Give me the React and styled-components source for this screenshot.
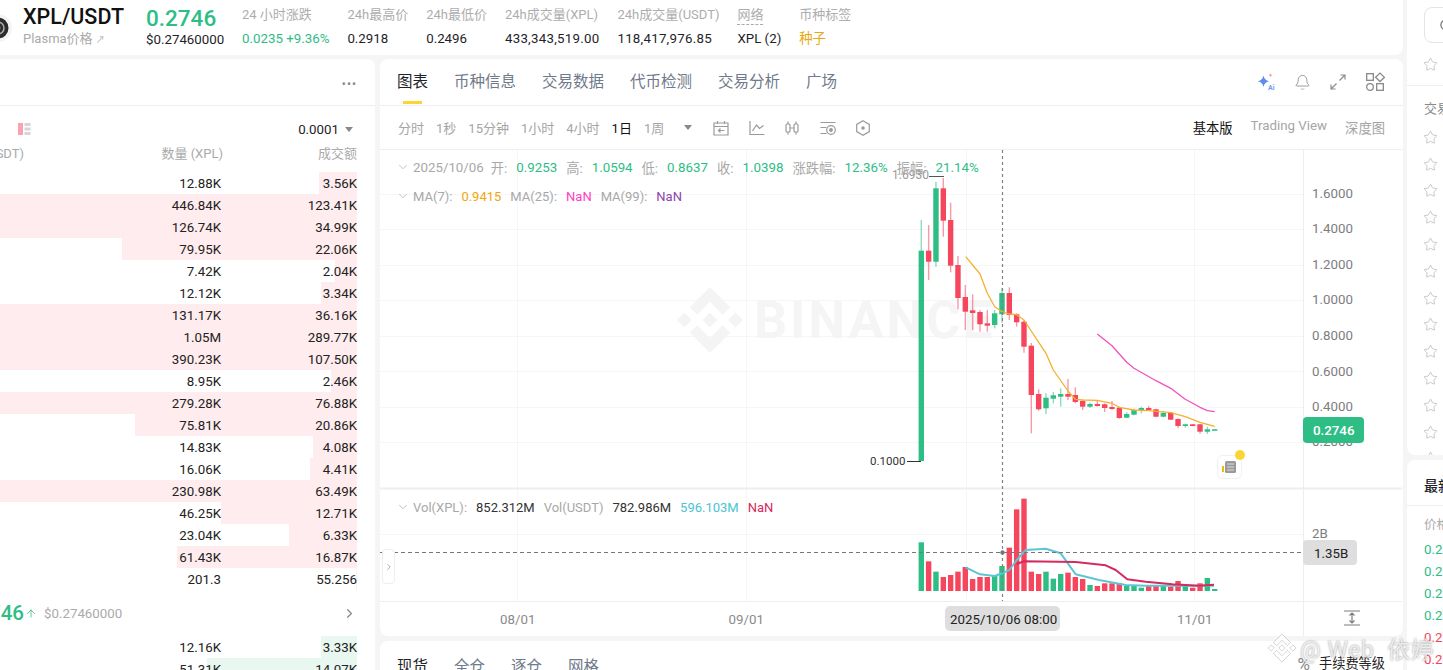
import React from 'react';
import styled, { createGlobalStyle } from 'styled-components';
import { Bell, ChevronDown, ChevronRight, Star, ArrowUp, Search } from 'lucide-react';

const GREEN = '#2ebd85';
const RED = '#f6465d';
const FONT = 'Roboto, "Noto Sans CJK SC", "Noto Sans", sans-serif';

const asks = [
  ['12.88K', '3.56K', 319],
  ['446.84K', '123.41K', 0],
  ['126.74K', '34.99K', 0],
  ['79.95K', '22.06K', 122],
  ['7.42K', '2.04K', 335],
  ['12.12K', '3.34K', 321],
  ['131.17K', '36.16K', 0],
  ['1.05M', '289.77K', 0],
  ['390.23K', '107.50K', 0],
  ['8.95K', '2.46K', 331],
  ['279.28K', '76.88K', 0],
  ['75.81K', '20.86K', 135],
  ['14.83K', '4.08K', 313],
  ['16.06K', '4.41K', 310],
  ['230.98K', '63.49K', 0],
  ['46.25K', '12.71K', 221],
  ['23.04K', '6.33K', 289],
  ['61.43K', '16.87K', 177],
  ['201.3', '55.256', 356],
];

const bids = [
  ['12.16K', '3.33K', 321],
  ['51.31K', '14.07K', 207],
];

const stats = [
  { label: '24 小时涨跌', value: '0.0235 +9.36%', tone: GREEN },
  { label: '24h最高价', value: '0.2918' },
  { label: '24h最低价', value: '0.2496' },
  { label: '24h成交量(XPL)', value: '433,343,519.00', wide: true },
  { label: '24h成交量(USDT)', value: '118,417,976.85', wide: true },
  { label: '网络', value: 'XPL (2)', dashed: true },
  { label: '币种标签', value: '种子', tone: '#e8a80c' },
];

const chartTabs = ['图表', '币种信息', '交易数据', '代币检测', '交易分析', '广场'];
const intervals = ['分时', '1秒', '15分钟', '1小时', '4小时', '1日', '1周'];

// up, bodyTop, bodyBottom, wickTop, wickBottom, in page pixels
const candles = [
  [1, 250.7, 461, 220, 461],
  [0, 250.7, 261.7, 225, 280],
  [1, 188.3, 261.7, 181.7, 266.7],
  [0, 188.3, 220.7, 178, 236.7],
  [0, 220, 265.7, 202.7, 272.3],
  [0, 265, 298, 256, 309.3],
  [0, 297, 311.7, 285, 330],
  [0, 310.3, 313, 294.3, 330],
  [0, 312, 324.3, 310, 331.7],
  [0, 323.3, 325.7, 310, 331.7],
  [1, 313.3, 325, 310, 328.3],
  [1, 293, 314.3, 288, 322.7],
  [0, 293, 315, 287.3, 320],
  [0, 314.3, 322.3, 313.3, 326.7],
  [0, 321.7, 346.7, 320, 352.7],
  [0, 345.7, 395, 343, 433.3],
  [0, 394, 409.3, 389.3, 410.7],
  [1, 397.7, 408.3, 393.3, 414],
  [1, 395.3, 398.7, 392, 403.3],
  [1, 394, 396.7, 388.3, 406.7],
  [0, 394, 396.7, 379, 400],
  [0, 395, 402, 387.3, 403.3],
  [0, 401, 406.7, 400, 410],
  [1, 404, 406.7, 402.7, 408],
  [0, 404, 406, 400, 406.7],
  [0, 404.3, 408, 403.3, 412],
  [0, 407, 409, 401, 410],
  [0, 407.7, 418, 406.7, 418.7],
  [1, 414, 417.7, 412.3, 418],
  [1, 410, 414.7, 408.7, 415.3],
  [1, 408, 410.3, 406.7, 413.3],
  [0, 408, 410, 406, 410.7],
  [0, 409.3, 416.7, 408.7, 417.3],
  [1, 413, 416.7, 410.7, 417.3],
  [0, 412.7, 419.7, 412, 420],
  [0, 419, 426, 418.3, 428.3],
  [1, 424.3, 426, 423.7, 427.7],
  [0, 424.3, 426, 424, 426.3],
  [0, 424.3, 431.7, 424, 433.7],
  [1, 429.3, 431.7, 426.7, 434],
  [1, 429.3, 430.7, 429.3, 430.7],
];

const volumeTops = [
  157, 214, 245, 261, 255, 245, 231, 267, 261, 261, 255, 228, 173, 58, 26, 245, 252, 245, 266, 252,
  248, 261, 267, 285, 288, 280, 280, 280, 288, 286, 293, 288, 288, 288, 290, 273, 288, 293, 280, 264, 297,
];

const ma7 = '966.7,256.7 981,274 988.3,293.3 995.7,306.7 1003,311.7 1010.3,314 1017.7,314.7 1025,320 1047,353.3 1054.3,370 1069,391 1076.3,399.3 1083.7,400 1098.3,400.3 1113,403.3 1120.3,407.3 1135,410 1149.7,410.7 1171.7,412.7 1186.3,416.7 1201,422.3 1215.7,426.3';
const ma25 = '1098.3,334 1113,345.7 1127.7,362.3 1135,368.3 1157,380.7 1171.7,388.3 1186.3,399.3 1201,407.3 1208.3,410.7 1215.7,411.7';
const volMa1 = '966.7,567.3 981,574.3 995.7,576 1003,573.3 1010.3,570 1017.7,560 1026.7,550 1046.7,548.7 1061.7,553.3 1076.7,574.3 1100,580 1126.7,585 1146.7,585.7 1215,585.7';
const volMa2 = '1017.7,564 1025,561.3 1076.7,562 1106.7,565.3 1116.7,570 1128.3,579.3 1146.7,581.7 1173.3,584.3 1200,585.7 1215,584.7';

const candleX = i => 922.3 + i * 7.335;

const GlobalStyle = createGlobalStyle`
  html, body {
    margin: 0;
    width: 1443px;
    height: 670px;
    overflow: hidden;
    background: #f5f5f5;
    font-family: ${FONT};
    color: #1e2329;
  }
`;

const Page = styled.div`
  display: flex;
  gap: 4px;
  width: 1730px;
  height: 670px;
  margin-left: -40px;
`;

const MainColumn = styled.div`
  display: flex;
  flex-direction: column;
  gap: 4px;
  width: 1443px;
  flex: none;
`;

const Header = styled.header`
  display: flex;
  align-items: center;
  height: 55px;
  padding-left: 24px;
  background: #fff;
  border-radius: 0 0 8px 0;
`;

const Logo = styled.div`
  display: flex;
  align-items: center;
  justify-content: center;
  width: 28px;
  height: 28px;
  margin-right: 11px;
  border-radius: 50%;
  background: #f4f4f4;
`;

const NameBlock = styled.div`
  width: 123px;
  margin-top: -4px;
`;

const PairName = styled.div`
  font-size: 21.5px;
  font-weight: 500;
  line-height: 28px;
  color: #111;
`;

const PairLink = styled.div`
  font-size: 13px;
  line-height: 16px;
  color: #aaa;
`;

const SmallArrow = styled.span`
  font-size: 9px;
  margin-left: 3px;
`;

const PriceBlock = styled.div`
  width: 96px;
  margin-top: -4px;
`;

const BigPrice = styled.div`
  font-size: 22.5px;
  font-weight: 500;
  line-height: 28px;
  color: ${GREEN};
`;

const SmallPrice = styled.div`
  font-size: 13.3px;
  line-height: 16px;
`;

const StatList = styled.div`
  display: flex;
  gap: 18px;
`;

const Stat = styled.div`
  display: flex;
  flex-direction: column;
  gap: 5px;
`;

const StatLabel = styled.div`
  font-size: 13px;
  line-height: 18px;
  color: #adadad;
  width: fit-content;
  border-bottom: ${p => (p.$dashed ? '1px dashed #aaa' : '1px solid transparent')};
  margin-top: -1px;
`;

const StatValue = styled.div`
  font-size: 13.3px;
  line-height: 18px;
  letter-spacing: ${p => (p.$wide ? '0.25px' : '0')};
  color: ${p => p.$tone || '#1e2329'};
`;

const Body = styled.div`
  display: flex;
  gap: 5px;
  flex: 1;
  min-height: 0;
`;

const BookPanel = styled.section`
  width: 415px;
  flex: none;
  background: #fff;
  border-radius: 0 8px 0 0;
  overflow: hidden;
`;

const BookTop = styled.div`
  display: flex;
  align-items: center;
  justify-content: flex-end;
  height: 46px;
  padding-right: 18px;
  border-bottom: 1px solid #eee;
`;

const Dots = styled.span`
  font-size: 12px;
  letter-spacing: 1px;
  color: #888;
  line-height: 1;
  margin-top: 4px;
`;

const BookControls = styled.div`
  display: flex;
  align-items: center;
  justify-content: space-between;
  height: 28px;
  margin-top: 9px;
  padding: 0 22px 0 58px;
  font-size: 13.3px;
`;

const TickSize = styled.span`
  display: flex;
  align-items: center;
  gap: 6px;
`;

const Caret = styled.span`
  width: 0;
  height: 0;
  border-left: 4px solid transparent;
  border-right: 4px solid transparent;
  border-top: 5px solid #888;
  margin-left: ${p => p.$gap || 0}px;
  margin-right: ${p => p.$after || 0}px;
`;

const BookHead = styled.div`
  display: grid;
  grid-template-columns: 64px 199px 134px;
  height: 22px;
  line-height: 22px;
  font-size: 13px;
  color: #aaa;
  margin-bottom: 7px;
  text-align: right;
  white-space: nowrap;
`;

const PriceHead = styled.span`
  justify-self: end;
`;

const BookRow = styled.div`
  position: relative;
  display: grid;
  grid-template-columns: 261px 136px;
  width: 397px;
  height: 22px;
  line-height: 23px;
  font-size: 13.3px;
  text-align: right;
  color: #222;
`;

const DepthBar = styled.div`
  position: absolute;
  top: 0;
  right: 0;
  bottom: 0;
  background: ${p => (p.$side === 'ask' ? '#feecee' : '#e9f7f1')};
`;

const BookCell = styled.span`
  position: relative;
`;

const MidRow = styled.div`
  display: flex;
  align-items: center;
  height: 46px;
  width: 397px;
  color: #aaa;
  font-size: 13.3px;
`;

const MidPrice = styled.span`
  display: flex;
  align-items: center;
  justify-content: flex-end;
  gap: 1px;
  width: 77px;
  flex: none;
  font-size: 20.5px;
  font-weight: 500;
  color: ${GREEN};
`;

const MidUsd = styled.span`
  flex: 1;
  padding-left: 7px;
`;

const RightColumn = styled.div`
  display: flex;
  flex-direction: column;
  gap: 5px;
  flex: 1;
  min-width: 0;
`;

const ChartPanel = styled.section`
  display: flex;
  flex-direction: column;
  height: 577px;
  flex: none;
  background: #fff;
  border-radius: 8px;
  overflow: hidden;
`;

const ChartTabs = styled.div`
  display: flex;
  align-items: center;
  height: 46px;
  flex: none;
  padding: 0 18px 0 17px;
  border-bottom: 1px solid #eee;
`;

const TabList = styled.div`
  display: flex;
  gap: 26px;
  flex: 1;
`;

const Tab = styled.div`
  position: relative;
  font-size: 15.5px;
  line-height: ${p => p.$line || 44}px;
  color: ${p => (p.$active ? '#1e2329' : '#707a8a')};

  ${p => p.$underline && `
    &::after {
      content: '';
      position: absolute;
      left: 6px;
      right: 6px;
      bottom: 0;
      height: 3px;
      background: #fcd535;
    }
  `}
`;

const IconRow = styled.div`
  display: flex;
  align-items: center;
  gap: 18px;
  color: #8b8b8b;
`;

const Toolbar = styled.div`
  display: flex;
  align-items: center;
  height: 43px;
  flex: none;
  padding: 0 18px;
  border-bottom: 1px solid #eee;
  font-size: 13px;
`;

const Intervals = styled.div`
  display: flex;
  align-items: center;
  gap: 12px;
`;

const Interval = styled.span`
  color: ${p => (p.$active ? '#111' : '#a5a5a5')};
`;

const ToolIcons = styled.div`
  display: flex;
  align-items: center;
  gap: 17.5px;
  flex: 1;
  color: #9a9a9a;
`;

const ViewTabs = styled.div`
  display: flex;
  gap: 18px;
  font-size: 13.3px;
`;

const Canvas = styled.div`
  position: relative;
  flex: 1;
  min-height: 0;

  svg.plot {
    display: block;
  }
`;

const Legend = styled.div`
  position: absolute;
  left: 16px;
  top: ${p => p.$top}px;
  display: flex;
  align-items: center;
  gap: 9px;
  height: 18px;
  font-size: ${p => p.$size || 13}px;
  color: #a8a8a8;
  white-space: nowrap;
`;

const LegendToggle = styled.span`
  display: flex;
  margin-right: -6px;
`;

const LegendDate = styled.span`
  margin-right: -2px;
`;

const LegendValue = styled.span`
  color: ${p => p.$tone || GREEN};
`;

const SideToggle = styled.div`
  position: absolute;
  left: 2px;
  top: 399px;
  display: flex;
  align-items: center;
  justify-content: center;
  width: 11px;
  height: 33px;
  background: #fff;
  border: 1px solid #eee;
  border-radius: 4px;
  color: #999;
`;

const AxisText = styled.text`
  font-family: ${FONT};
  font-size: ${p => p.$size || 13.3}px;
  fill: ${p => p.$fill || '#7d7d7d'};
  font-weight: ${p => p.$weight || 400};
  dominant-baseline: central;
`;

const OrderPanel = styled.section`
  display: flex;
  align-items: flex-start;
  justify-content: space-between;
  flex: 1;
  padding: 16px 18px 0 17px;
  background: #fff;
  border-radius: 8px 8px 0 0;
  overflow: hidden;
`;

const FeeLink = styled.div`
  display: flex;
  align-items: center;
  gap: 9px;
  margin-top: -3px;
  font-size: 13.2px;
  line-height: 20px;
  color: #222;
`;

const Percent = styled.span`
  font-size: 17px;
  color: #888;
`;

const SideColumn = styled.div`
  display: flex;
  flex-direction: column;
  gap: 5px;
  flex: 1;
  min-width: 0;
`;

const MarketCard = styled.section`
  height: 455px;
  flex: none;
  background: #fff;
  border-radius: 0 0 8px 8px;
  overflow: hidden;
`;

const SearchBox = styled.div`
  display: flex;
  align-items: center;
  height: 34px;
  margin: 7px 17px 0;
  padding-left: 14px;
  border: 1px solid #e4e4e4;
  border-radius: 8px;
  color: #777;
`;

const FavRow = styled.div`
  display: flex;
  align-items: center;
  height: 42px;
  padding-left: 16px;
  border-bottom: 1px solid #eee;
  color: #b5b5b5;
`;

const MarketHead = styled.div`
  padding-left: 17px;
  margin-top: 14px;
  height: 24px;
  line-height: 18px;
  font-size: 13px;
  color: #888;
`;

const StarRow = styled.div`
  display: flex;
  align-items: center;
  height: 26.8px;
  padding-left: 16px;
  color: #b5b5b5;
`;

const TradesCard = styled.section`
  flex: 1;
  background: #fff;
  border-radius: 8px 8px 0 0;
  overflow: hidden;
`;

const TradesTitle = styled.div`
  height: 45px;
  line-height: 52px;
  padding-left: 17px;
  font-size: 14px;
  font-weight: 500;
  color: #1e2329;
  border-bottom: 1px solid #eee;
`;

const TradesHead = styled.div`
  padding: 10px 0 5px 17px;
  line-height: 18px;
  font-size: 12.5px;
  color: #aaa;
`;

const TradeRow = styled.div`
  height: 22px;
  line-height: 22px;
  padding-left: 17px;
  font-size: 13.3px;
  color: ${p => (p.$up ? GREEN : RED)};
`;

const Stamp = styled.div`
  position: fixed;
  left: 1268px;
  top: 631px;
  display: flex;
  align-items: center;
  gap: 4px;
  font-size: 23px;
  white-space: pre;
  letter-spacing: 0.6px;
  color: rgba(255, 255, 255, 0.75);
  text-shadow: 0 0 2px rgba(90, 90, 90, 0.7);
  pointer-events: none;
`;

function BinanceMark({ size, fill, stroke }) {
  return (
    <svg width={size} height={size} viewBox="0 0 32 32">
      <g fill={fill} stroke={stroke} strokeWidth={stroke ? 0.6 : 0}>
        <path d="M9.8 13.4 16 7.2l6.2 6.2 3.6-3.6L16 0 6.2 9.8z" />
        <path d="M0 16l3.6-3.6L7.2 16l-3.6 3.6z" />
        <path d="M9.8 18.6 16 24.8l6.2-6.2 3.6 3.6L16 32l-9.8-9.8z" />
        <path d="M24.8 16l3.6-3.6L32 16l-3.6 3.6z" />
        <path d="M19.6 16 16 12.4 13.3 15.1l-.9.9L16 19.6z" />
      </g>
    </svg>
  );
}

function CoinLogo() {
  return (
    <Logo>
      <svg width="22" height="22" viewBox="0 0 22 22">
        <circle cx="11" cy="11" r="10.5" fill="#2b2b2b" />
        <circle cx="11" cy="11" r="6" fill="none" stroke="#aaa" strokeWidth="1.6" />
        <circle cx="11" cy="11" r="2.6" fill="#777" />
      </svg>
    </Logo>
  );
}

const Glyph = ({ children, size = 18, box = 18 }) => (
  <svg width={size} height={size} viewBox={`0 0 ${box} ${box}`} fill="none" stroke="currentColor" strokeWidth="1.2">
    {children}
  </svg>
);

function AiIcon() {
  return (
    <svg width="20" height="20" viewBox="0 0 20 20">
      <path d="M7.5 3.5c.7 3.4 2.2 5 5.6 5.8-3.4.8-4.9 2.4-5.6 5.8-.7-3.4-2.2-5-5.6-5.8 3.4-.8 4.9-2.4 5.6-5.8z" fill="#5b8def" />
      <path d="M14.5 1c.2 1.3.8 1.9 2 2.2-1.2.3-1.8.9-2 2.2-.2-1.3-.8-1.9-2-2.2 1.2-.3 1.8-.9 2-2.200z" fill="#f29aa8" />
      <text x="12" y="18" fontSize="7" fontWeight="700" fill="#6f9bf5" fontFamily="Roboto, sans-serif">Ai</text>
    </svg>
  );
}

function ExpandIcon() {
  return (
    <Glyph>
      <path d="M10.5 7.5 16 2M11.500 2H16v4.500M7.500 10.500 2 16M6.500 16H2v-4.500" />
    </Glyph>
  );
}

function LayoutIcon() {
  return (
    <Glyph size={20}>
      <rect x="1.500" y="1.500" width="6" height="6" />
      <path d="m13.500 1 4 3.800-4 3.800-4-3.800z" />
      <circle cx="4.500" cy="13.500" r="3" />
      <rect x="10.500" y="10.500" width="6" height="6" />
    </Glyph>
  );
}

function BookStyleIcon() {
  return (
    <svg width="13" height="12" viewBox="0 0 13 12">
      <rect x="0" y="0" width="5" height="12" fill="#f9a3ae" />
      <rect x="6.500" y="0" width="6" height="3" fill="#d5d5d5" />
      <rect x="6.500" y="4.500" width="6" height="3" fill="#d5d5d5" />
      <rect x="6.500" y="9" width="6" height="3" fill="#d5d5d5" />
    </svg>
  );
}

const toolGlyphs = [
  <Glyph key="date">
    <path d="M2 4h14v12H2zM2 7.500h14M5.500 2v3M12.500 2v3M12.500 11.500H6.500M8.500 9.500l-2 2 2 2" />
  </Glyph>,
  <Glyph key="line">
    <path d="M2 2v13.500h14.500M4.500 12l4-6 3 3.500 4-3" />
  </Glyph>,
  <Glyph key="candle">
    <rect x="3" y="5" width="4" height="8" rx="1" />
    <rect x="11" y="5" width="4" height="8" rx="1" />
    <path d="M5 2.500V5M5 13v2.500M13 2.500V5M13 13v2.500M7 9h4" />
  </Glyph>,
  <Glyph key="setting">
    <path d="M1.500 3.500h15M1.500 8.500h6M1.500 14.500h6" />
    <circle cx="12" cy="11" r="4.300" />
    <circle cx="12" cy="11" r="1.300" fill="currentColor" />
  </Glyph>,
  <Glyph key="hex">
    <path d="m9 1.800 6.300 3.600v7.200L9 16.200l-6.300-3.600V5.400z" />
    <circle cx="9" cy="9" r="1.800" fill="currentColor" stroke="none" />
  </Glyph>,
];

function FitIcon() {
  return (
    <g stroke="#7d7d7d" strokeWidth="1.200" fill="none">
      <path d="M1345 611h16M1345 625h16M1353 613v10M1350.500 615.500l2.500-2.500 2.500 2.500M1350.500 620.500l2.500 2.500 2.500-2.500" />
    </g>
  );
}

function Plot() {
  return (
    <svg className="plot" width="1022" height="486" viewBox="381 150 1022 486">
      <g stroke="#f6f6f6" strokeWidth="1">
        {[194, 229, 265, 300, 336, 371, 407, 442, 534].map(y => (
          <line key={y} x1="381" x2="1304" y1={y + 0.5} y2={y + 0.5} />
        ))}
        {[518, 747, 967, 1195].map(x => (
          <line key={x} x1={x + 0.5} x2={x + 0.5} y1="150" y2="601" />
        ))}
      </g>

      <g transform="translate(678 287)">
        <BinanceMark size={66} fill="#f4f4f4" />
      </g>
      <AxisText x="755" y="320" $size={52} $weight={700} $fill="#f5f5f5" letterSpacing="3">BINANCE</AxisText>

      <g stroke="#eeeeee">
        <line x1="381" x2="1403" y1="488.500" y2="488.500" strokeWidth="2" />
        <line x1="381" x2="1403" y1="601.500" y2="601.500" />
        <line x1="1304.500" x2="1304.500" y1="150" y2="636" />
      </g>

      {candles.map(([up, top, bottom, wickTop, wickBottom], i) => {
        const x = candleX(i);
        const color = up ? GREEN : RED;
        return (
          <g key={i}>
            <line x1={x} x2={x} y1={wickTop} y2={wickBottom} stroke={color} strokeOpacity="0.55" strokeWidth="1.400" />
            <rect x={x - 2.700} y={top} width="5.400" height={Math.max(bottom - top, 1.500)} fill={color} />
          </g>
        );
      })}

      <polyline points={ma7} fill="none" stroke="#f3b02f" strokeWidth="1.300" strokeLinejoin="round" />
      <polyline points={ma25} fill="none" stroke="#ef52bf" strokeWidth="1.300" strokeLinejoin="round" />

      {volumeTops.map((t, i) => {
        const top = 490 + t / 3;
        return (
          <rect
            key={i}
            x={candleX(i) - 2.700}
            y={top}
            width="5.400"
            height={591 - top}
            fill={candles[i][0] ? GREEN : RED}
          />
        );
      })}

      <polyline points={volMa1} fill="none" stroke="#5cc6d4" strokeWidth="2" strokeLinejoin="round" />
      <polyline points={volMa2} fill="none" stroke="#d42a5e" strokeWidth="2" strokeLinejoin="round" />

      <line x1="1003.500" x2="1003.500" y1="150" y2="601" stroke="#808080" strokeWidth="1.200" strokeDasharray="3 3" />
      <line x1="381" x2="1304" y1="552.500" y2="552.500" stroke="#777" strokeDasharray="4 3" />
      <circle cx="1003.500" cy="552.500" r="2.200" fill="#777" />

      <AxisText x="893" y="175" $size={12} $fill="#999">1.6930</AxisText>
      <line x1="930" x2="945" y1="176.500" y2="176.500" stroke="#555" />
      <AxisText x="871" y="461" $size={11.500} $fill="#333">0.1000</AxisText>
      <line x1="908" x2="922" y1="461.500" y2="461.500" stroke="#333" />

      {[['1.6000', 193], ['1.4000', 228.500], ['1.2000', 264], ['1.0000', 299], ['0.8000', 335], ['0.6000', 371], ['0.4000', 406], ['0.2000', 441]].map(([label, y]) => (
        <AxisText key={label} x="1313" y={y}>{label}</AxisText>
      ))}
      <rect x="1304" y="417" width="61" height="26" rx="4" fill={GREEN} />
      <AxisText x="1314" y="430.500" $fill="#fff" $weight={500}>0.2746</AxisText>

      <AxisText x="1313" y="533">2B</AxisText>
      <rect x="1304" y="540" width="54" height="25" rx="4" fill="#dedede" />
      <AxisText x="1315" y="553" $fill="#222">1.35B</AxisText>

      {[['08/01', 501], ['09/01', 729.500], ['11/01', 1178]].map(([label, x]) => (
        <AxisText key={label} x={x} y="619.500" $fill="#8a8a8a">{label}</AxisText>
      ))}
      <rect x="946" y="606" width="115" height="25" rx="5" fill="#dedede" />
      <AxisText x="951" y="619" $fill="#222">2025/10/06 08:00</AxisText>
      <FitIcon />

      <rect x="1218.500" y="455.500" width="24" height="23" rx="5" fill="#fff" stroke="#f0f0f0" />
      <rect x="1226" y="461" width="11" height="12" rx="1.500" fill="#9a9a9a" />
      <path d="M1228 464h7M1228 467h7M1228 470h7" stroke="#ddd" strokeWidth="1" />
      <rect x="1223" y="466" width="2" height="6" fill="#f0b90b" />
      <circle cx="1241" cy="455" r="5" fill="#fcd535" />
    </svg>
  );
}

function App() {
  return (
    <>
      <GlobalStyle />
      <Page>
        <MainColumn>
          <Header>
            <CoinLogo />
            <NameBlock>
              <PairName>XPL/USDT</PairName>
              <PairLink>Plasma价格<SmallArrow>↗</SmallArrow></PairLink>
            </NameBlock>
            <PriceBlock>
              <BigPrice>0.2746</BigPrice>
              <SmallPrice>$0.27460000</SmallPrice>
            </PriceBlock>
            <StatList>
              {stats.map(s => (
                <Stat key={s.label}>
                  <StatLabel $dashed={s.dashed}>{s.label}</StatLabel>
                  <StatValue $tone={s.tone} $wide={s.wide}>{s.value}</StatValue>
                </Stat>
              ))}
            </StatList>
          </Header>

          <Body>
            <BookPanel>
              <BookTop>
                <Dots>•••</Dots>
              </BookTop>
              <BookControls>
                <BookStyleIcon />
                <TickSize>
                  0.0001
                  <Caret />
                </TickSize>
              </BookControls>
              <BookHead>
                <PriceHead>价格 (USDT)</PriceHead>
                <span>数量 (XPL)</span>
                <span>成交额</span>
              </BookHead>
              {asks.map(([qty, total, left]) => (
                <BookRow key={qty}>
                  <DepthBar $side="ask" style={{ width: left === 0 ? 397 : 357 - left }} />
                  <BookCell>{qty}</BookCell>
                  <BookCell>{total}</BookCell>
                </BookRow>
              ))}
              <MidRow>
                <MidPrice>
                  0.2746
                  <ArrowUp size={15} strokeWidth={1.6} />
                </MidPrice>
                <MidUsd>$0.27460000</MidUsd>
                <ChevronRight size={15} color="#888" />
              </MidRow>
              {bids.map(([qty, total, left]) => (
                <BookRow key={qty}>
                  <DepthBar $side="bid" style={{ width: 357 - left }} />
                  <BookCell>{qty}</BookCell>
                  <BookCell>{total}</BookCell>
                </BookRow>
              ))}
            </BookPanel>

            <RightColumn>
              <ChartPanel>
                <ChartTabs>
                  <TabList>
                    {chartTabs.map((t, i) => (
                      <Tab key={t} $active={i === 0} $underline={i === 0}>{t}</Tab>
                    ))}
                  </TabList>
                  <IconRow>
                    <AiIcon />
                    <Bell size={17} strokeWidth={1.2} />
                    <ExpandIcon />
                    <LayoutIcon />
                  </IconRow>
                </ChartTabs>
                <Toolbar>
                  <Intervals>
                    {intervals.map(t => (
                      <Interval key={t} $active={t === '1日'}>{t}</Interval>
                    ))}
                    <Caret $gap={8} $after={20} />
                  </Intervals>
                  <ToolIcons>
                    {toolGlyphs}
                  </ToolIcons>
                  <ViewTabs>
                    <Interval $active>基本版</Interval>
                    <Interval>Trading View</Interval>
                    <Interval>深度图</Interval>
                  </ViewTabs>
                </Toolbar>
                <Canvas>
                  <Plot />
                  <Legend $top={8} $size={13.3}>
                    <LegendToggle><ChevronDown size={14} strokeWidth={1.2} /></LegendToggle>
                    <LegendDate>2025/10/06</LegendDate>
                    <span>开:</span><LegendValue>0.9253</LegendValue>
                    <span>高:</span><LegendValue>1.0594</LegendValue>
                    <span>低:</span><LegendValue>0.8637</LegendValue>
                    <span>收:</span><LegendValue>1.0398</LegendValue>
                    <span>涨跌幅:</span><LegendValue>12.36%</LegendValue>
                    <span>振幅:</span><LegendValue>21.14%</LegendValue>
                  </Legend>
                  <Legend $top={37}>
                    <LegendToggle><ChevronDown size={14} strokeWidth={1.2} /></LegendToggle>
                    <span>MA(7):</span><LegendValue $tone="#f0a70a">0.9415</LegendValue>
                    <span>MA(25):</span><LegendValue $tone="#ff3fc1">NaN</LegendValue>
                    <span>MA(99):</span><LegendValue $tone="#8e44ad">NaN</LegendValue>
                  </Legend>
                  <Legend $top={348}>
                    <LegendToggle><ChevronDown size={14} strokeWidth={1.2} /></LegendToggle>
                    <span>Vol(XPL):</span><LegendValue $tone="#333">852.312M</LegendValue>
                    <span>Vol(USDT)</span><LegendValue $tone="#333">782.986M</LegendValue>
                    <LegendValue $tone="#4cc3d2">596.103M</LegendValue>
                    <LegendValue $tone="#d42a5e">NaN</LegendValue>
                  </Legend>
                  <SideToggle>
                    <ChevronRight size={10} />
                  </SideToggle>
                </Canvas>
              </ChartPanel>

              <OrderPanel>
                <TabList>
                  {['现货', '全仓', '逐仓', '网格'].map((t, i) => (
                    <Tab key={t} $active={i === 0} $line={20}>{t}</Tab>
                  ))}
                </TabList>
                <FeeLink>
                  <Percent>%</Percent>
                  手续费等级
                </FeeLink>
              </OrderPanel>
            </RightColumn>
          </Body>
        </MainColumn>

        <SideColumn>
          <MarketCard>
            <SearchBox>
              <Search size={15} />
            </SearchBox>
            <FavRow>
              <Star size={15} strokeWidth={1.2} />
            </FavRow>
            <MarketHead>交易对</MarketHead>
            {Array.from({ length: 13 }, (_, i) => (
              <StarRow key={i}>
                <Star size={15} strokeWidth={1.2} />
              </StarRow>
            ))}
          </MarketCard>
          <TradesCard>
            <TradesTitle>最新成交</TradesTitle>
            <TradesHead>价格 (USDT)</TradesHead>
            {[1, 1, 1, 1, 0, 0].map((up, i) => (
              <TradeRow key={i} $up={up}>0.2746</TradeRow>
            ))}
          </TradesCard>
        </SideColumn>
      </Page>

      <Stamp>
        <BinanceMark size={28} fill="rgba(255,255,255,0.8)" stroke="rgba(120,120,120,0.6)" />
        @ Web  依婷
      </Stamp>
    </>
  );
}

export default App;
